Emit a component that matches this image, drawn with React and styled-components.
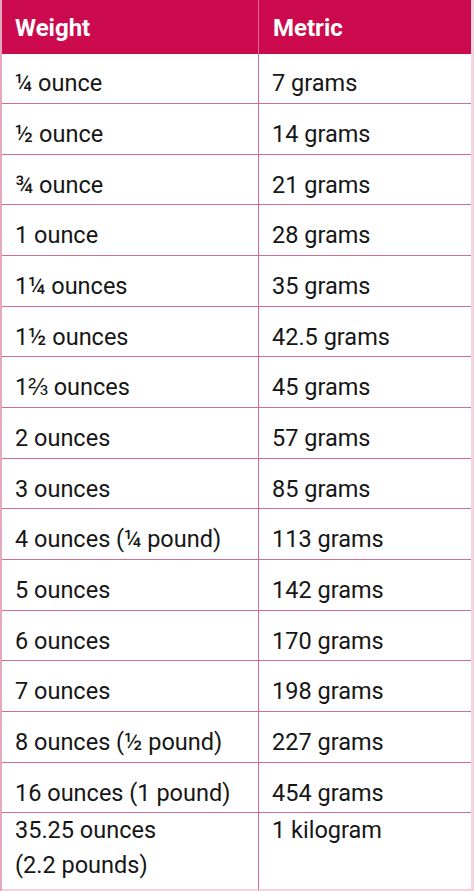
import React from "react";
import styled, { createGlobalStyle } from "styled-components";

const Global = createGlobalStyle`
  html, body { margin: 0; padding: 0; background: #fff; }
  body { font-family: Roboto, "Liberation Sans", sans-serif; }
`;

const Table = styled.div`
  width: 474px;
  height: 891px;
  overflow: hidden;
  box-sizing: border-box;
  border-left: 2px solid #e2a9c0;
  border-right: 3px solid #f3d3e0;
  display: grid;
  grid-template-columns: 256px 1fr;
  grid-auto-rows: 50.67px;
  grid-template-rows: 53.5px;
`;

const HeadCell = styled.div`
  background: #cb0b4d;
  color: #fff;
  font-weight: 700;
  font-size: 24px;
  display: flex;
  align-items: center;
  padding-top: 2px;
  box-sizing: border-box;
  border-left: ${(p) => (p.$right ? "1px solid #e26a92" : "none")};
  margin-left: ${(p) => (p.$right ? "0" : "-2px")};
  padding-left: ${(p) => (p.$right ? "14px" : "15px")};
`;

const Cell = styled.div`
  color: #161616;
  font-size: 23.5px;
  box-sizing: border-box;
  border-bottom: 1.5px solid #cf6d93;
  border-left: ${(p) => (p.$right ? "1.5px solid #cf6d93" : "none")};
  padding-left: 13px;
  display: flex;
  align-items: center;
  padding-top: 10px;
  ${(p) =>
    p.$tall &&
    `
    height: 78px;
    align-items: flex-start;
    padding-top: 0;
    line-height: 35px;
    border-bottom: 2px solid #f3d3e0;
  `}
`;

const rows = [
  ["¼ ounce", "7 grams"],
  ["½ ounce", "14 grams"],
  ["¾ ounce", "21 grams"],
  ["1 ounce", "28 grams"],
  ["1¼ ounces", "35 grams"],
  ["1½ ounces", "42.5 grams"],
  ["1⅔ ounces", "45 grams"],
  ["2 ounces", "57 grams"],
  ["3 ounces", "85 grams"],
  ["4 ounces (¼ pound)", "113 grams"],
  ["5 ounces", "142 grams"],
  ["6 ounces", "170 grams"],
  ["7 ounces", "198 grams"],
  ["8 ounces (½ pound)", "227 grams"],
  ["16 ounces (1 pound)", "454 grams"],
];

export default function App() {
  return (
    <>
      <Global />
      <Table>
        <HeadCell>Weight</HeadCell>
        <HeadCell $right>Metric</HeadCell>
        {rows.map(([a, b]) => (
          <React.Fragment key={a}>
            <Cell>{a}</Cell>
            <Cell $right>{b}</Cell>
          </React.Fragment>
        ))}
        <Cell $tall>
          35.25 ounces
          <br />
          (2.2 pounds)
        </Cell>
        <Cell $tall $right>1 kilogram</Cell>
      </Table>
    </>
  );
}
